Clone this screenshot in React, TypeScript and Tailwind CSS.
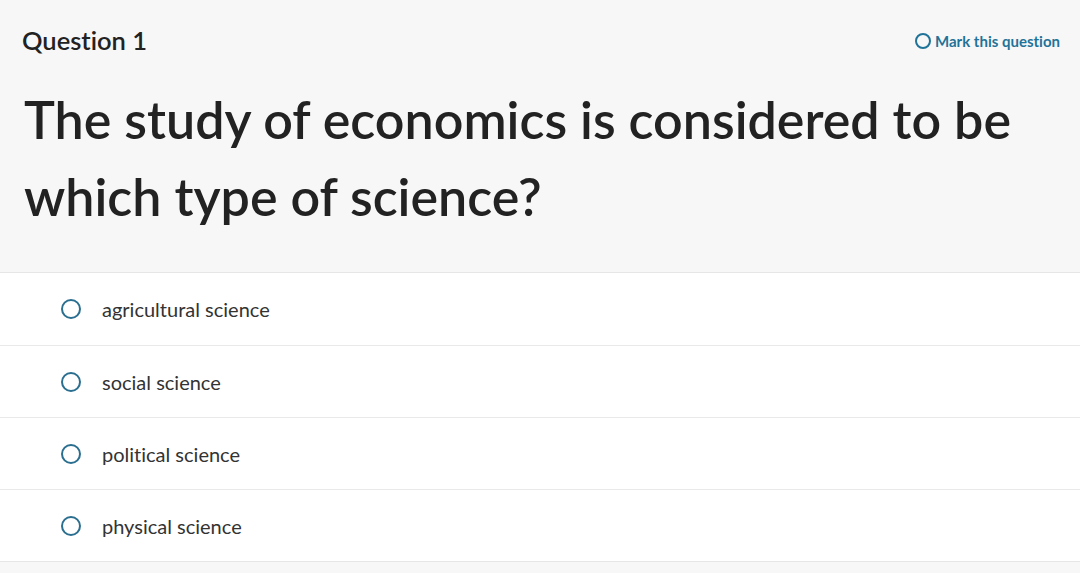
import { useState } from "react";

const options = [
  "agricultural science",
  "social science",
  "political science",
  "physical science",
];

export default function App() {
  const [selected, setSelected] = useState<number | null>(null);
  const [marked, setMarked] = useState(false);

  return (
    <div
      className="min-h-screen bg-[#f7f7f7] text-[#222] [font-variant-ligatures:none]"
      style={{ fontFamily: "Lato, 'Open Sans', sans-serif" }}
    >
      <div className="px-[22px] pt-[24px] pb-[37px]">
        <div className="flex items-start justify-between">
          <h2 className="text-[25.5px] font-semibold leading-[32px] text-[#222]">
            Question 1
          </h2>
          <button
            onClick={() => setMarked(!marked)}
            className="mt-[6px] mr-[-2px] flex items-center gap-[4px] text-[15px] font-bold text-[#1f7399]"
          >
            <span
              className={`h-[16px] w-[16px] rounded-full border-[2px] border-[#1f7399] ${
                marked ? "bg-[#1f7399]" : ""
              }`}
            />
            Mark this question
          </button>
        </div>
        <h1 className="mt-[25px] pl-[2px] text-[52px] font-semibold leading-[77px] text-[#222]">
          The study of economics is considered to be which type of science?
        </h1>
      </div>

      <div className="border-y border-[#e6e6e6] bg-white">
        {options.map((opt, i) => (
          <label
            key={opt}
            onClick={() => setSelected(i)}
            className={`flex h-[72px] cursor-pointer items-center pl-[61px] ${
              i > 0 ? "border-t border-[#e9e9e9]" : ""
            }`}
          >
            <span className="flex h-[20px] w-[20px] items-center justify-center rounded-full border-[2px] border-[#2b6f90]">
              {selected === i && (
                <span className="h-[10px] w-[10px] rounded-full bg-[#2b6f90]" />
              )}
            </span>
            <span className="ml-[21px] text-[20px] text-[#333]">{opt}</span>
          </label>
        ))}
      </div>
    </div>
  );
}
